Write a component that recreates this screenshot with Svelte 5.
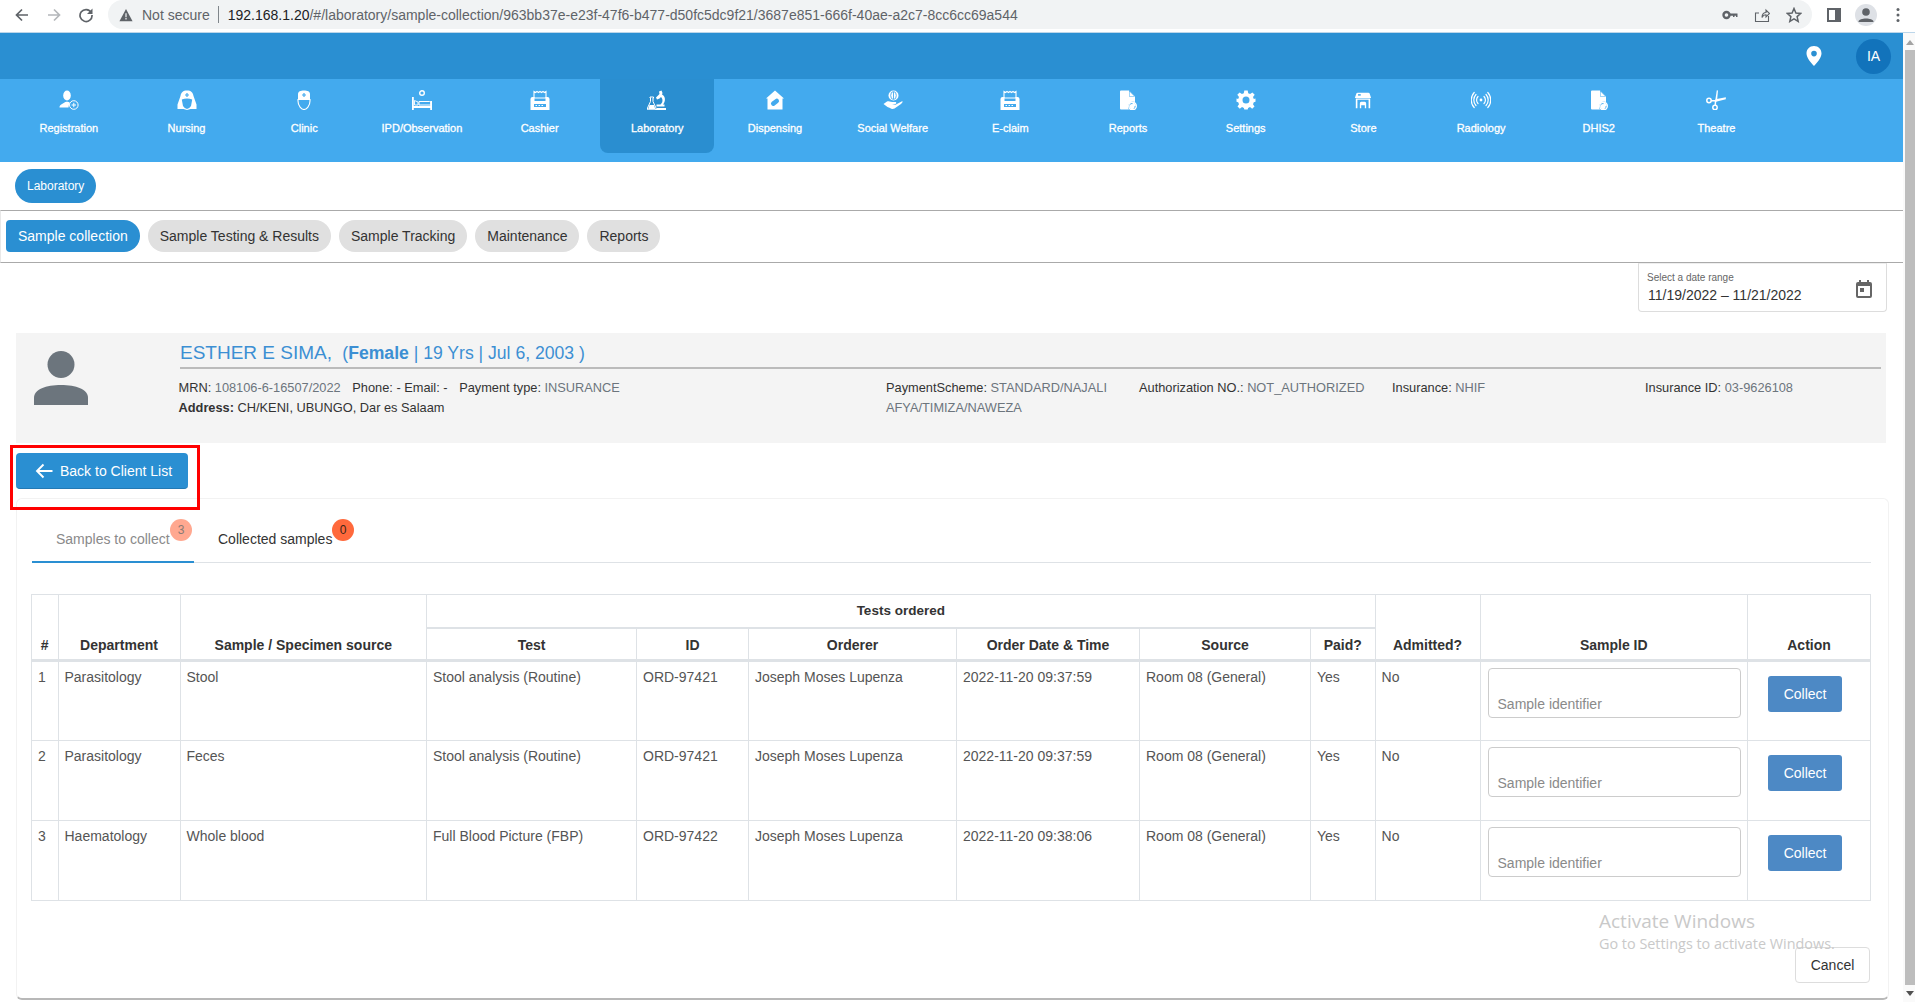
<script>
  const cut = '#43aaee';
  const receipt = `<path d="M4 1.500 5.500 2.500 7 1.500 8.500 2.500 10 1.500 11.500 2.500 13 1.500 14.500 2.500 16 1.500V8H4Z" fill="none" stroke="#fff" stroke-width="1.100"/><path d="M2.500 7H4.500V11H15.500V7H17.500Q19.500 7 19.500 9V20H.5V9Q.5 7 2.500 7Z" fill="#fff"/><rect x="4" y="14" width="12" height="3" fill="${cut}"/><path d="M5.500 15.500H14.500" stroke="#fff" stroke-dasharray="1.500 1.500"/>`;
  const doc = `<path d="M3 .5H11L17 6.500V12A5 5 0 0 0 11 19.500H3Q2 19.500 2 18.500V1.500Q2 .5 3 .5Z" fill="#fff"/><path d="M11 .5V6.500H17Z" fill="${cut}"/><path d="M11.500 1.500V6H16Z" fill="#fff"/><circle cx="14.500" cy="16" r="3.800" fill="none" stroke="#fff" stroke-width="1.400"/><path d="M14.500 16V12.800A3.200 3.200 0 0 1 17.700 16Z" fill="#fff"/><circle cx="14" cy="16.500" r="2.600" fill="#fff"/>`;
  const icons = {
    registration: `<ellipse cx="8" cy="5.500" rx="3.800" ry="5"/><path d="M.5 17.500C.5 14.500 3.500 14 5.500 12.500 6 11.500 10 11.500 10.500 12.500L11 13.500A6 6 0 0 0 9.500 17.500Z"/><circle cx="14.800" cy="15" r="4.300" fill="${cut}" stroke="#fff" stroke-width="1"/><path d="M14.800 12.800V17.200M12.600 15H17" stroke="#fff" stroke-width="1"/>`,
    nursing: `<path d="M10 .5C14 .5 16 2.500 16.500 6L19.500 14.500V19H13.500L10 20 6.500 19H.5V14.500L3.500 6C4 2.500 6 .5 10 .5Z"/><path d="M4.800 9.500Q10 7.500 15.200 9.500L14 16Q12 19 10 19 8 19 6 16Z" fill="${cut}"/><path d="M10 3V7M8 5H12" stroke="${cut}" stroke-width="1.200"/>`,
    clinic: `<path d="M10 .5C13.500 .5 16 1.500 16 4V10H4V4C4 1.500 6.500 .5 10 .5Z"/><path d="M4 9V11C4 16 7.500 19.500 10 19.500S16 16 16 11V9" fill="none" stroke="#fff" stroke-width="1.100"/><path d="M10 3V7M8 5H12" stroke="${cut}" stroke-width="1.200"/>`,
    ipd: `<circle cx="10" cy="3" r="2.300" fill="none" stroke="#fff" stroke-width="1.400"/><rect x="0" y="7" width="1.800" height="13"/><rect x="18.200" y="11" width="1.800" height="9"/><path d="M0 16H20V18H0Z"/><path d="M2.500 10.500 6 12V15H2.500Z" fill="none" stroke="#fff" stroke-width=".9"/><path d="M7 11.500H17.500Q19 11.500 19 13V15H7Z" fill="none" stroke="#fff" stroke-width="1"/>`,
    receipt,
    laboratory: `<path d="M10 18H19V20H8Z"/><path d="M12 1.500 14.500 .5 15.500 3 15 4.500C18.500 6 19 11 16 14.500H17.500V16.500H9.500V14.500H13.500C15.500 13 16.500 9.500 14 7L12.500 8.500 10 9.500 9 7.500 12.500 4Z"/><path d="M3 7H6.500V8H6V11.500L9 18Q9.500 20 8 20H1.500Q0 20 .5 18L3.500 11.500V8H3Z" fill="none" stroke="#fff" stroke-width="1"/><path d="M2.500 15H7L8.500 19.500H1Z"/>`,
    dispensing: `<path d="M10 .5 19 8.500H17.500V19.500H2.500V8.500H1Z"/><rect x="5.500" y="10" width="9" height="4.600" rx="2.300" transform="rotate(-38 10 12.300)" fill="${cut}"/>`,
    social: `<circle cx="10.500" cy="5.500" r="5" fill="#fff"/><ellipse cx="10.500" cy="5.500" rx="2.800" ry="4" fill="none" stroke="${cut}" stroke-width=".9"/><path d="M10.500 2V9" stroke="${cut}" stroke-width=".9"/><path d="M.5 14 4 11.500C6 10.500 8 12 10.500 12H13Q14 13.500 12.500 14H9L12.500 14.700 19.500 11Q20 12.500 18 14L11.500 18.500Q9 19.500 7 18L4.500 17Z"/>`,
    doc,
    settings: `<path fill-rule="evenodd" d="M8.300 .5H11.700L12.200 3.200 14.100 4 16.400 2.400 18.700 4.800 17 7.100 17.800 9 19.500 8.400V11.800L17.800 12.300 17 14.200 18.500 16.400 16.200 18.700 14 17.100 12.100 17.900 11.700 19.500H8.300L7.900 17.900 6 17.100 3.800 18.700 1.500 16.400 3 14.200 2.200 12.300.5 11.800V8.400L2.200 9 3 7.100 1.300 4.800 3.600 2.400 5.900 4 7.800 3.200ZM10 6.500A3.500 3.500 0 1 0 10 13.500 3.500 3.500 0 0 0 10 6.500Z"/>`,
    store: `<g transform="translate(1 2) scale(.9 .85)"><path d="M4 1H16Q17 1 17.500 2L19 7H1L2.500 2Q3 1 4 1Z"/><path d="M2 7.500H18V9H2ZM2 9H3.800V19H2ZM16.200 9H18V19H16.200Z"/><path d="M6.500 19V13.500Q6.500 11.500 8 11.500H12Q13.500 11.500 13.500 13.500V19H12V15.500H8V19Z"/><rect x="4.500" y="2.500" width="3" height="1.800" fill="${cut}"/></g>`,
    radiology: `<circle cx="10" cy="10" r="1.400"/><g fill="none" stroke="#fff" stroke-width="1.200" stroke-linecap="round"><path d="M7 6.500A5 5 0 0 0 7 13.500M13 6.500A5 5 0 0 1 13 13.500"/><path d="M5 4.500A8 8 0 0 0 5 15.500M15 4.500A8 8 0 0 1 15 15.500"/><path d="M3.200 2.500A11 11 0 0 0 3.200 17.500M16.800 2.500A11 11 0 0 1 16.800 17.500"/></g>`,
    theatre: `<path d="M10.800 .3 12 .6 11 11 9 12Z"/><path d="M9.500 9.300 19.800 7.300V9.200L10 11.700Z"/><g fill="none" stroke="#fff" stroke-width="1.500"><circle cx="3" cy="10.500" r="2.200"/><circle cx="9" cy="17.500" r="2.200"/><path d="M5.200 10.800 10 10.800M9.300 15.200 9.500 11"/></g>`
  };
  const nav = [
    ['Registration', 'registration'], ['Nursing', 'nursing'], ['Clinic', 'clinic'],
    ['IPD/Observation', 'ipd'], ['Cashier', 'receipt'], ['Laboratory', 'laboratory'],
    ['Dispensing', 'dispensing'], ['Social Welfare', 'social'], ['E-claim', 'receipt'],
    ['Reports', 'doc'], ['Settings', 'settings'], ['Store', 'store'],
    ['Radiology', 'radiology'], ['DHIS2', 'doc'], ['Theatre', 'theatre']
  ];
  const subTabs = ['Sample Testing & Results', 'Sample Tracking', 'Maintenance', 'Reports'];
  const rows = [
    { n: 1, dep: 'Parasitology', sample: 'Stool', test: 'Stool analysis (Routine)', id: 'ORD-97421', when: '2022-11-20 09:37:59' },
    { n: 2, dep: 'Parasitology', sample: 'Feces', test: 'Stool analysis (Routine)', id: 'ORD-97421', when: '2022-11-20 09:37:59' },
    { n: 3, dep: 'Haematology', sample: 'Whole blood', test: 'Full Blood Picture (FBP)', id: 'ORD-97422', when: '2022-11-20 09:38:06' }
  ];
  const cols = [26.5, 122, 246.5, 210, 112, 208, 183, 171, 64.5, 105, 267.5, 123];
</script>

<div class="root">
  <header class="browser">
    <svg class="bi" viewBox="0 0 16 16"><path d="M14 8H3M8 2.500 2.500 8 8 13.500" fill="none" stroke="#5f6368" stroke-width="1.700"/></svg>
    <svg class="bi fwd" viewBox="0 0 16 16"><path d="M2 8H13M8 2.500 13.500 8 8 13.500" fill="none" stroke="#b4b7ba" stroke-width="1.700"/></svg>
    <svg class="bi rel" viewBox="0 0 16 16"><path d="M13.200 5.500A6 6 0 1 0 14 8" fill="none" stroke="#5f6368" stroke-width="1.700"/><path d="M14.500 1.500V7H9Z" fill="#5f6368"/></svg>
    <div class="omni">
      <svg class="warn" viewBox="0 0 16 16"><path d="M8 1 15.500 15H.5Z" fill="#5f6368"/><path d="M8 6V10.500M8 11.500V13" stroke="#f1f3f4" stroke-width="1.400"/></svg>
      <span class="ns">Not secure</span>
      <span class="sep"></span>
      <span class="url"><b>192.168.1.20</b>/#/laboratory/sample-collection/963bb37e-e23f-47f6-b477-d50fc5dc9f21/3687e851-666f-40ae-a2c7-8cc6cc69a544</span>
      <span class="omni-icons">
        <svg class="key" viewBox="0 0 16 16"><circle cx="4.500" cy="8" r="3" fill="none" stroke="#5f6368" stroke-width="2.400"/><path d="M8 6.500H15.500V10H14V8.800H12.500V10H11V8.800H8Z" fill="#5f6368"/></svg>
        <svg viewBox="0 0 16 16"><path d="M6 14.500H1.500V6H5M14.500 9V14.500H6M8 10.500C8 7 10 5.500 12 5.500V3L15.500 6.500 12 10V7.800C10.500 7.800 9 8.500 8 10.500Z" fill="none" stroke="#5f6368" stroke-width="1.100"/></svg>
        <svg viewBox="0 0 16 16"><path d="M8 1.500 9.900 6 14.800 6.400 11.100 9.600 12.200 14.400 8 11.900 3.800 14.400 4.900 9.600 1.200 6.400 6.100 6Z" fill="none" stroke="#5f6368" stroke-width="1.500"/></svg>
      </span>
    </div>
    <svg class="side" viewBox="0 0 14 14"><path fill-rule="evenodd" d="M0 0H14V14H0ZM2 2V12H8V2Z" fill="#5f6368"/></svg>
    <span class="prof"><svg viewBox="0 0 22 22"><circle cx="11" cy="8" r="3.800" fill="#5f6368"/><path d="M3.500 17.500C4 13.500 18 13.500 18.500 17.500V18H3.500Z" fill="#5f6368"/></svg></span>
    <svg class="dots" viewBox="0 0 4 16"><circle cx="2" cy="2.500" r="1.500" fill="#5f6368"/><circle cx="2" cy="8" r="1.500" fill="#5f6368"/><circle cx="2" cy="13.500" r="1.500" fill="#5f6368"/></svg>
  </header>

  <div class="viewport">
    <main class="page">
      <div class="topbar">
        <svg class="pin" viewBox="0 0 16 20"><path fill-rule="evenodd" d="M8 0C12.500 0 15.500 3.200 15.500 7.500 15.500 11.500 11 17 8 20 5 17 .5 11.500 .5 7.500.5 3.200 3.500 0 8 0ZM8 4.800A2.800 2.800 0 1 0 8 10.400 2.800 2.800 0 0 0 8 4.800Z" fill="#fff"/></svg>
        <span class="avatar">IA</span>
      </div>

      <nav class="nav">
        {#each nav as [label, icon]}
          <div class="nav-item" class:active={label === 'Laboratory'}>
            <svg class="nav-icon" viewBox="0 0 20 20" fill="#fff">{@html icons[icon]}</svg>
            <span>{label}</span>
          </div>
        {/each}
      </nav>

      <div class="crumbs"><span class="crumb">Laboratory</span></div>

      <div class="subtabs">
        <span class="subtab current">Sample collection</span>
        {#each subTabs as t}
          <span class="subtab">{t}</span>
        {/each}
      </div>

      <div class="date-row">
        <div class="date-box">
          <div>
            <div class="date-label">Select a date range</div>
            <div class="date-value">11/19/2022 – 11/21/2022</div>
          </div>
          <svg class="cal" viewBox="0 0 16 18"><path fill-rule="evenodd" d="M3 0H5V2H11V0H13V2H14Q16 2 16 4V16Q16 18 14 18H2Q0 18 0 16V4Q0 2 2 2H3ZM2 6V16H14V6Z" fill="#666"/><rect x="4" y="8" width="4" height="4" fill="#666"/></svg>
        </div>
      </div>

      <section class="patient">
        <svg class="p-avatar" viewBox="0 0 54 54"><ellipse cx="27" cy="13.500" rx="13.500" ry="13.500" fill="#6c757d"/><path d="M0 54V47C0 38 12 34 27 34S54 38 54 47V54Z" fill="#6c757d"/></svg>
        <div class="p-body">
          <h2 class="p-name">ESTHER E SIMA, <span class="p-meta">(<b>Female</b> | 19 Yrs | Jul 6, 2003 )</span></h2>
          <div class="p-grid">
            <div>
              <div class="p-line">
                <span>MRN: <i>108106-6-16507/2022</i></span>
                <span class="m1">Phone: - Email: -</span>
                <span class="m2">Payment type: <i>INSURANCE</i></span>
              </div>
              <div class="p-line"><b>Address:</b> CH/KENI, UBUNGO, Dar es Salaam</div>
            </div>
            <div class="p-line scheme">PaymentScheme: <i>STANDARD/NAJALI AFYA/TIMIZA/NAWEZA</i></div>
            <div class="p-line">Authorization NO.: <i>NOT_AUTHORIZED</i></div>
            <div class="p-line">Insurance: <i>NHIF</i></div>
            <div class="p-line">Insurance ID: <i>03-9626108</i></div>
          </div>
        </div>
      </section>

      <div class="back-row">
        <button class="back">
          <svg viewBox="0 0 18 16"><path d="M17.500 8H2M8.500 1.500 2 8 8.500 14.500" fill="none" stroke="#fff" stroke-width="1.900"/></svg>
          Back to Client List
        </button>
        <span class="red-box"></span>
      </div>

      <section class="card">
        <div class="tabs">
          <div class="tab on">Samples to collect<span class="badge b1">3</span></div>
          <div class="tab">Collected samples<span class="badge b2">0</span></div>
        </div>

        <table>
          <colgroup>
            {#each cols as w}<col style="width:{w}px" />{/each}
          </colgroup>
          <thead>
            <tr class="h1">
              <th rowspan="2">#</th>
              <th rowspan="2">Department</th>
              <th rowspan="2">Sample / Specimen source</th>
              <th colspan="6">Tests ordered</th>
              <th rowspan="2">Admitted?</th>
              <th rowspan="2">Sample ID</th>
              <th rowspan="2">Action</th>
            </tr>
            <tr class="h2">
              <th>Test</th><th>ID</th><th>Orderer</th><th>Order Date &amp; Time</th><th>Source</th><th>Paid?</th>
            </tr>
          </thead>
          <tbody>
            {#each rows as r}
              <tr>
                <td>{r.n}</td>
                <td>{r.dep}</td>
                <td>{r.sample}</td>
                <td>{r.test}</td>
                <td>{r.id}</td>
                <td>Joseph Moses Lupenza</td>
                <td>{r.when}</td>
                <td>Room 08 (General)</td>
                <td>Yes</td>
                <td>No</td>
                <td class="cell-input"><div class="field">Sample identifier</div></td>
                <td class="cell-action"><button class="collect">Collect</button></td>
              </tr>
            {/each}
          </tbody>
        </table>

        <div class="foot"><button class="cancel">Cancel</button></div>
        <div class="activate">
          <div class="a1">Activate Windows</div>
          <div class="a2">Go to Settings to activate Windows.</div>
        </div>
      </section>
    </main>

    <aside class="scroll">
      <span class="up"></span>
      <span class="thumb"></span>
      <span class="down"></span>
    </aside>
  </div>
</div>

<style>
  :global(body) { margin: 0; background: #fff; }
  .root {
    width: 1915px; height: 1002px; overflow: hidden;
    font-family: "Liberation Sans", Arial, sans-serif; color: #333;
    display: flex; flex-direction: column;
  }
  i { font-style: normal; color: #6c757d; }
  button { font-family: inherit; }

  .browser { height: 33px; flex: none; display: flex; align-items: center; background: #fff; border-bottom: 1px solid #bcd6ea; box-sizing: border-box; padding-left: 14px; padding-bottom: 3px; }
  .bi { width: 16px; height: 16px; flex: none; }
  .fwd { margin-left: 16px; }
  .rel { margin-left: 16px; }
  .omni { width: 1704px; height: 29px; margin-left: 14px; background: #f1f3f4; border-radius: 15px; display: flex; align-items: center; padding-left: 11px; box-sizing: border-box; flex: none; }
  .warn { width: 14px; height: 14px; flex: none; }
  .ns { margin-left: 9px; font-size: 14px; color: #5f6368; white-space: nowrap; }
  .sep { width: 1px; height: 17px; background: #80868b; margin: 0 9px 0 8px; flex: none; }
  .url { font-size: 14px; color: #5f6368; white-space: nowrap; }
  .url b { font-weight: 400; color: #202124; }
  .omni-icons { margin-left: auto; display: flex; gap: 16px; padding-right: 10px; }
  .omni-icons svg { width: 16px; height: 16px; }
  .side { width: 14px; height: 14px; margin-left: 15px; flex: none; }
  .prof { width: 22px; height: 22px; border-radius: 50%; background: #dee1e6; margin-left: 14px; flex: none; display: flex; }
  .prof svg { width: 22px; height: 22px; }
  .dots { width: 4px; height: 16px; margin-left: 19px; flex: none; }

  .viewport { flex: 1; display: flex; min-height: 0; }
  .page { width: 1903px; flex: none; position: relative; }

  .topbar { height: 46px; background: #2a8fd2; display: flex; align-items: center; justify-content: flex-end; padding-right: 12px; }
  .pin { width: 16px; height: 20px; margin-right: 34px; }
  .avatar { width: 35px; height: 35px; border-radius: 50%; background: #1273bb; color: #fff; font-size: 14px; display: flex; align-items: center; justify-content: center; }

  .nav { height: 83px; box-sizing: border-box; background: #43aaee; display: flex; gap: 4px; padding-left: 12px; align-items: flex-start; }
  .nav-item { width: 113.7px; height: 74px; flex: none; box-sizing: border-box; padding-top: 11px; display: flex; flex-direction: column; align-items: center; color: #fff; font-size: 11px; border-radius: 0 0 8px 8px; -webkit-text-stroke: .3px #fff; }
  .nav-item.active { background: #2a8ed0; }
  .nav-icon { width: 20px; height: 20px; flex: none; }
  .nav-item span { margin-top: 10px; line-height: 16px; white-space: nowrap; }

  .crumbs { height: 48px; box-sizing: border-box; padding: 7px 0 0 15px; }
  .crumb { display: inline-flex; align-items: center; height: 34px; padding: 0 12px; border-radius: 17px; background: #2a8fd2; color: #fff; font-size: 12px; box-sizing: border-box; }

  .subtabs { height: 53px; box-sizing: border-box; border-top: 1px solid #aaa; border-bottom: 1px solid #aaa; border-left: 1px solid #e8e8e8; display: flex; gap: 8px; padding: 9px 0 0 5px; }
  .subtab { height: 32px; display: flex; align-items: center; padding: 0 12px; border-radius: 16px; background: #e0e0e0; color: #333; font-size: 14px; white-space: nowrap; }
  .subtab.current { background: #2a8fd2; color: #fff; border-radius: 4px 16px 16px 4px; }

  .date-row { display: flex; justify-content: flex-end; padding-right: 16px; }
  .date-box { width: 249px; height: 49px; box-sizing: border-box; border: 1px solid #ddd; border-top-color: #eee; border-radius: 0 0 4px 4px; padding: 8px 11px 0 8px; display: flex; justify-content: space-between; }
  .date-label { font-size: 10px; color: #666; line-height: 12px; }
  .date-value { font-size: 14px; color: #333; line-height: 16px; margin: 3px 0 0 1px; }
  .cal { width: 16px; height: 18px; margin: 8px 3px 0 0; }

  .patient { margin: 21px 17px 0 16px; height: 110px; background: #f4f4f4; display: flex; box-sizing: border-box; }
  .p-avatar { width: 54px; height: 54px; margin: 18px 0 0 18px; flex: none; }
  .p-body { margin-left: 92px; width: 1701px; flex: none; }
  .p-name { margin: 0; height: 36px; border-bottom: 2px solid #bbb; font-size: 19px; font-weight: 400; color: #3c8fd3; line-height: 39px; box-sizing: border-box; white-space: nowrap; }
  .p-name b { font-weight: 700; }
  .p-meta { margin-left: 5px; font-size: 17.600px; }
  .p-grid { display: grid; grid-template-columns: 707.5px 253px 253px 253px 1fr; padding-top: 9px; margin-left: -1.5px; }
  .p-line { font-size: 12.800px; line-height: 20px; color: #333; white-space: nowrap; }
  .p-line b { font-weight: 700; }
  .m1 { margin-left: 8px; }
  .m2 { margin-left: 8px; }
  .scheme { width: 240px; white-space: normal; }

  .back-row { margin: 10px 0 0 16px; height: 36px; position: relative; }
  .back { width: 172px; height: 36px; border: 0; border-bottom: 1px solid #2379b4; border-radius: 4px; background: #2a8fd2; color: #fff; font-size: 14px; display: flex; align-items: center; padding: 0 0 0 19px; gap: 7px; box-sizing: border-box; white-space: nowrap; }
  .back svg { width: 18px; height: 16px; flex: none; }
  .red-box { position: absolute; left: -6px; top: -8px; width: 190px; height: 65px; box-sizing: border-box; border: 3px solid #f00; pointer-events: none; z-index: 2; }

  .card { margin: 9px 14px 0 16px; height: 502px; box-sizing: border-box; background: #fff; border-radius: 6px; border: 1px solid #f2f2f2; border-bottom: 2px solid #b8b8b8; position: relative; padding: 0 0 0 14px; }
  .tabs { height: 64px; width: 1839px; margin-left: 1px; box-sizing: border-box; display: flex; border-bottom: 1px solid #dee2e6; }
  .tab { width: 162px; height: 64px; box-sizing: border-box; padding: 31px 0 0 24px; font-size: 14px; line-height: 18px; color: #333; position: relative; white-space: nowrap; }
  .tab.on { color: #8a8a8a; border-bottom: 2px solid #2a8fd2; }
  .badge { position: absolute; top: 20px; left: 138px; width: 22px; height: 22px; border-radius: 50%; display: flex; align-items: center; justify-content: center; font-size: 12px; }
  .b1 { background: #ffa890; color: #8a7a74; }
  .b2 { background: #ff693c; color: #3a2418; }

  table { margin-top: 31px; border-collapse: collapse; table-layout: fixed; width: 1839px; font-size: 14px; }
  th, td { border: 1px solid #dee2e6; }
  th { font-weight: 700; color: #333; text-align: center; vertical-align: bottom; padding: 0 6px 6px; line-height: 16px; }
  thead tr.h1 { height: 33px; }
  thead tr.h2 { height: 33px; }
  thead tr.h1 th[colspan] { vertical-align: middle; padding: 0 6px; font-size: 13.500px; border-bottom-width: 2px; }
  thead tr.h2 th { border-bottom-width: 3px; }
  thead tr.h1 th[rowspan] { border-bottom-width: 3px; }
  tbody tr { height: 80px; }
  td { vertical-align: top; padding: 7px 6px 0; line-height: 16px; color: #555; white-space: nowrap; }
  .cell-input { padding: 5.500px 6px 0 7px; }
  .field { height: 50px; box-sizing: border-box; border: 1px solid #ccc; border-radius: 4px; padding: 26px 0 0 9px; line-height: 18px; color: #8a8a8a; }
  .cell-action { padding: 13.500px 0 0 20px; }
  .collect { width: 74px; height: 36px; border: 0; border-radius: 3px; background: #4d89c5; color: #fff; font-size: 14px; }

  .foot { display: flex; justify-content: flex-end; width: 1839px; margin-top: 46px; }
  .cancel { width: 75px; height: 36px; background: #fff; border: 1px solid #ddd; border-radius: 4px; font-size: 14px; color: #333; }

  .activate { position: absolute; left: 1582px; top: 409px; color: #c9c9c9; font-family: "Open Sans", sans-serif; pointer-events: none; white-space: nowrap; }
  .a1 { font-size: 19px; line-height: 26px; }
  .a2 { font-size: 14.400px; line-height: 20px; }

  .scroll { width: 12px; flex: none; padding-left: 2px; box-sizing: border-box; display: flex; flex-direction: column; align-items: stretch; background: #fafafa; }
  .up, .down { height: 17px; flex: none; position: relative; }
  .up::after, .down::after { content: ""; position: absolute; left: 1px; border-left: 4px solid transparent; border-right: 4px solid transparent; }
  .up::after { top: 7px; border-bottom: 5px solid #a3a3a3; }
  .down::after { top: 6px; border-top: 5px solid #505050; }
  .thumb { flex: 1; background: #bdbdbd; }
</style>
